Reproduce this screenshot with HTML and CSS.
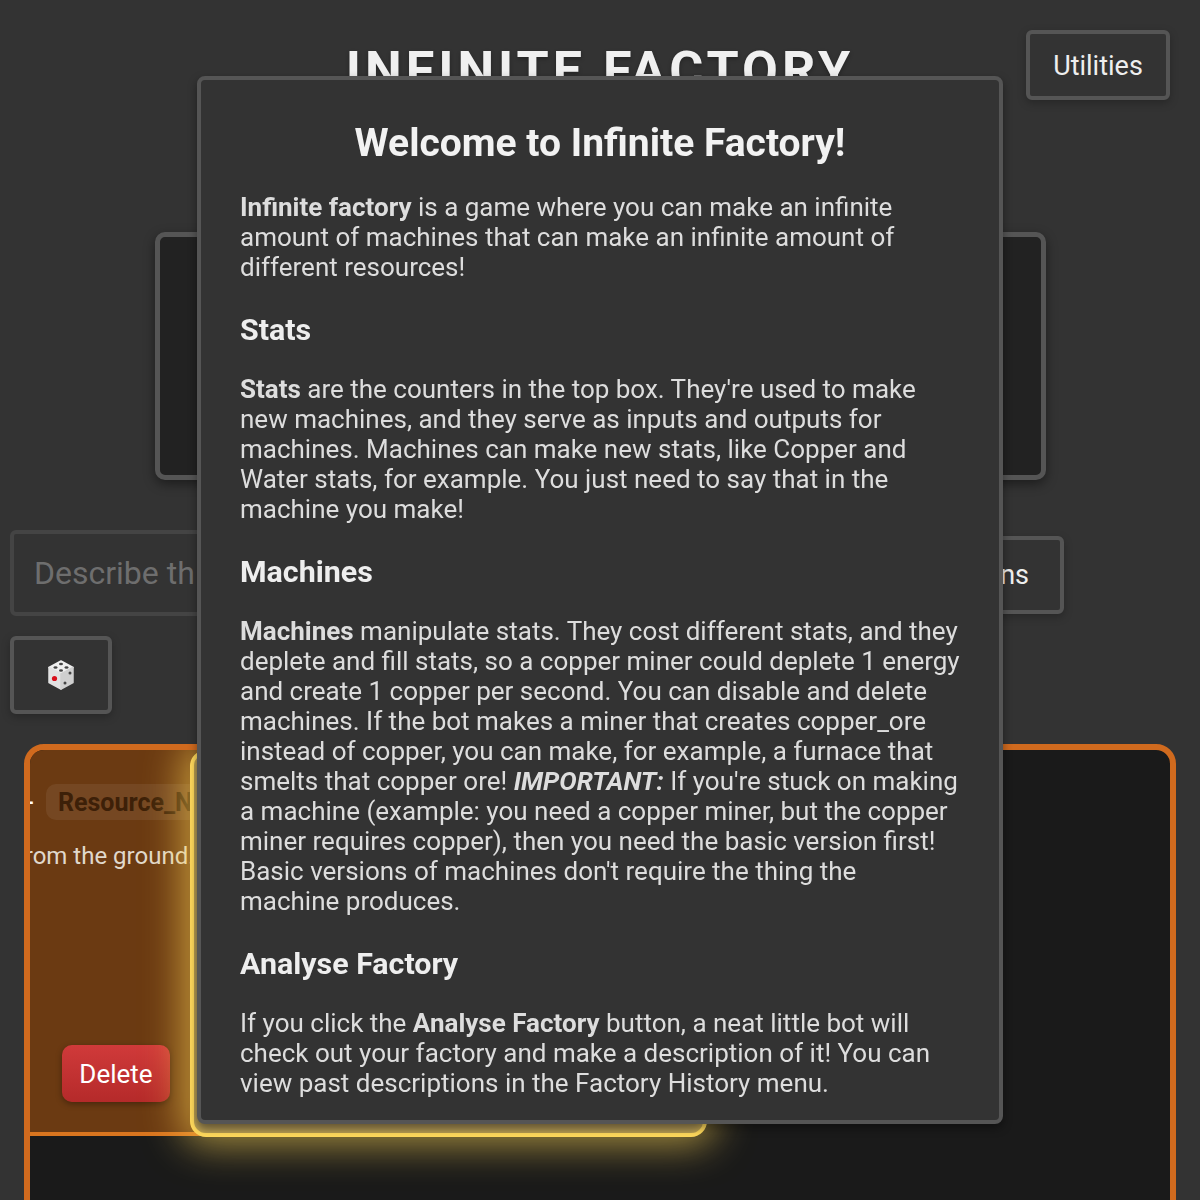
FILE: index.html
```html
<!DOCTYPE html>
<html lang="en">
<head>
<meta charset="utf-8">
<title>Infinite Factory</title>
<link rel="stylesheet" href="styles.css">
</head>
<body>
<div class="page">
  <header class="topbar">
    <h1 class="game-title">INFINITE FACTORY</h1>
    <button class="btn utilities">Utilities</button>
  </header>
  <section class="stats-box"></section>
  <section class="create-row">
    <input class="describe" type="text" placeholder="Describe the machine you want to make">
    <button class="btn options">Options</button>
  </section>
  <div class="dice-row">
    <button class="btn dice" aria-label="Random">
      <svg width="26" height="30" viewBox="0 0 26 30">
        <path d="M13 1 L25 7.5 L13 14 L1 7.5 Z" fill="#efefef" stroke="#efefef" stroke-width="1.5" stroke-linejoin="round"/>
        <path d="M1 7.5 L13 14 L13 29 L1 22.500 Z" fill="#e2e2e2" stroke="#e2e2e2" stroke-width="1.500" stroke-linejoin="round"/>
        <path d="M25 7.5 L13 14 L13 29 L25 22.500 Z" fill="#cfcfcf" stroke="#cfcfcf" stroke-width="1.500" stroke-linejoin="round"/>
        <ellipse cx="13" cy="4" rx="2" ry="1.300" fill="#444"/>
        <ellipse cx="7.500" cy="7.500" rx="2" ry="1.300" fill="#444"/>
        <ellipse cx="18.500" cy="7.500" rx="2" ry="1.300" fill="#444"/>
        <ellipse cx="13" cy="10.500" rx="2" ry="1.300" fill="#444"/>
        <circle cx="6.500" cy="18.500" r="2.600" fill="#d8101c"/>
        <circle cx="22" cy="13" r="1.500" fill="#444"/>
        <circle cx="17" cy="23" r="1.500" fill="#444"/>
      </svg>
    </button>
  </div>
  <section class="factory">
    <div class="machine-grid">
      <article class="machine owned">
        <div class="machine-head">
          <span class="machine-name">Copper Miner -</span>
          <span class="chip">Resource_Name</span>
        </div>
        <p class="machine-desc">Digs copper from the ground.</p>
        <div class="machine-actions"><button class="delete">Delete</button></div>
      </article>
      <article class="machine selected"></article>
    </div>
  </section>
</div>
<div class="overlay">
  <div class="modal">
    <h2 class="modal-title">Welcome to Infinite Factory!</h2>
    <p><strong>Infinite factory</strong> is a game where you can make an infinite amount of machines that can make an infinite amount of different resources!</p>
    <h3>Stats</h3>
    <p><strong>Stats</strong> are the counters in the top box. They're used to make new machines, and they serve as inputs and outputs for machines. Machines can make new stats, like Copper and Water stats, for example. You just need to say that in the machine you make!</p>
    <h3>Machines</h3>
    <p><strong>Machines</strong> manipulate stats. They cost different stats, and they deplete and fill stats, so a copper miner could deplete 1 energy and create 1 copper per second. You can disable and delete machines. If the bot makes a miner that creates copper_ore instead of copper, you can make, for example, a furnace that smelts that copper ore! <strong><em>IMPORTANT:</em></strong> If you're stuck on making a machine (example: you need a copper miner, but the copper miner requires copper), then you need the basic version first! Basic versions of machines don't require the thing the machine produces.</p>
    <h3>Analyse Factory</h3>
    <p>If you click the <strong>Analyse Factory</strong> button, a neat little bot will check out your factory and make a description of it! You can view past descriptions in the Factory History menu.</p>
  </div>
</div>
</body>
</html>
```
FILE: styles.css
```css
* { box-sizing: border-box; }
html, body { margin: 0; height: 100%; overflow: hidden; }
body { background: #333; color: #eee; font-family: Roboto, "Liberation Sans", sans-serif; }
.page { height: 1200px; overflow: hidden; padding: 30px 24px 0; display: flex; flex-direction: column; }

.topbar { display: flex; justify-content: center; height: 70px; position: relative; margin-bottom: 132px; flex: none; }
.game-title { margin: 13px 0 0; font-size: 52px; line-height: 56px; font-weight: 700; letter-spacing: 4px; color: #f0f0f0; text-shadow: 0 2px 4px rgba(0,0,0,.3); white-space: nowrap; }
.btn { background: #333; color: #eee; font-family: inherit; font-size: 27px; border: 4px solid #555; border-radius: 6px; box-shadow: 0 3px 8px rgba(0,0,0,.25); }
.utilities { position: absolute; right: 6px; top: 0; width: 144px; height: 70px; padding: 2px 0 0; }

.stats-box { flex: none; align-self: center; width: 891px; height: 248px; background: #222; border: 5px solid #555; border-radius: 10px; box-shadow: 0 4px 12px rgba(0,0,0,.45); margin-left: 1px; margin-bottom: 50px; }

.create-row { flex: none; display: flex; align-items: flex-start; gap: 10px; margin: 0 112px 20px -14px; height: 86px; }
.describe { flex: 1; width: 0; min-width: 0; height: 86px; background: #333; border: 4px solid #444; border-radius: 6px; padding: 0 676px 0 20px; font: 32px Roboto, sans-serif; color: #eee; outline: none; }
.describe::placeholder { color: #6e6e6e; }
.options { flex: none; width: 180px; height: 78px; margin-top: 6px; padding: 0 31px 0 0; text-align: right; }

.dice-row { flex: none; margin-left: -14px; margin-bottom: 30px; }
.dice { width: 102px; height: 78px; display: flex; align-items: center; justify-content: center; padding: 0; }

.factory { flex: none; height: 600px; background: #1a1a1a; border: 6px solid #d06a1e; border-radius: 20px; overflow: hidden; }
.machine-grid { display: flex; height: 100%; }
.machine-grid .machine { flex: none; }
.owned { width: 200px; height: 386px; background: #6b3a12; border-bottom: 4px solid #d9751f; overflow: hidden; padding: 34px 0 22px 16px; display: flex; flex-direction: column; }
.machine-head { display: flex; align-items: center; gap: 12px; margin-left: -188px; white-space: nowrap; height: 36px; }
.machine-name { color: #fff; font-size: 24px; font-weight: 600; width: 176px; text-align: right; flex: none; }
.chip { background: rgba(255,255,255,.07); color: #3d2008; font-weight: 700; font-size: 25px; line-height: 30px; border-radius: 10px; padding: 4px 12px 2px; }
.machine-desc { margin: 21px 0 0 -163px; white-space: nowrap; font-size: 24px; line-height: 30px; color: #e0d8cc; }
.machine-actions { margin-top: auto; padding-left: 16px; padding-bottom: 8px; }
.delete { width: 108px; height: 57px; border: 0; border-radius: 10px; color: #fff; font: 26px Roboto, sans-serif; background: linear-gradient(#d03a3a, #b52a2a); box-shadow: 0 2px 6px rgba(0,0,0,.35); }
.selected { width: 517px; height: 387px; margin-left: -40px; position: relative; background: #a08a50; border: 4px solid #ffd95c; border-radius: 16px; box-shadow: 0 0 38px 8px rgba(255,215,85,.6), inset 0 0 10px rgba(255,215,85,.5); }

.overlay { position: fixed; inset: 0; display: flex; align-items: center; justify-content: center; }
.modal { width: 806px; height: 1048px; overflow: hidden; background: #333; border: 4px solid #555; border-radius: 8px; padding: 40px 39px; box-shadow: 0 4px 10px rgba(0,0,0,.4); }
.modal-title { margin: 0 0 26px; text-align: center; font-size: 39px; line-height: 46px; font-weight: 700; color: #f2f2f2; }
.modal h3 { margin: 31px 0 27px; font-size: 30.4px; line-height: 34px; font-weight: 700; color: #eee; }
.modal p { margin: 0; font-size: 26px; line-height: 30px; color: #ddd; }
.modal strong { font-weight: 700; }
```
